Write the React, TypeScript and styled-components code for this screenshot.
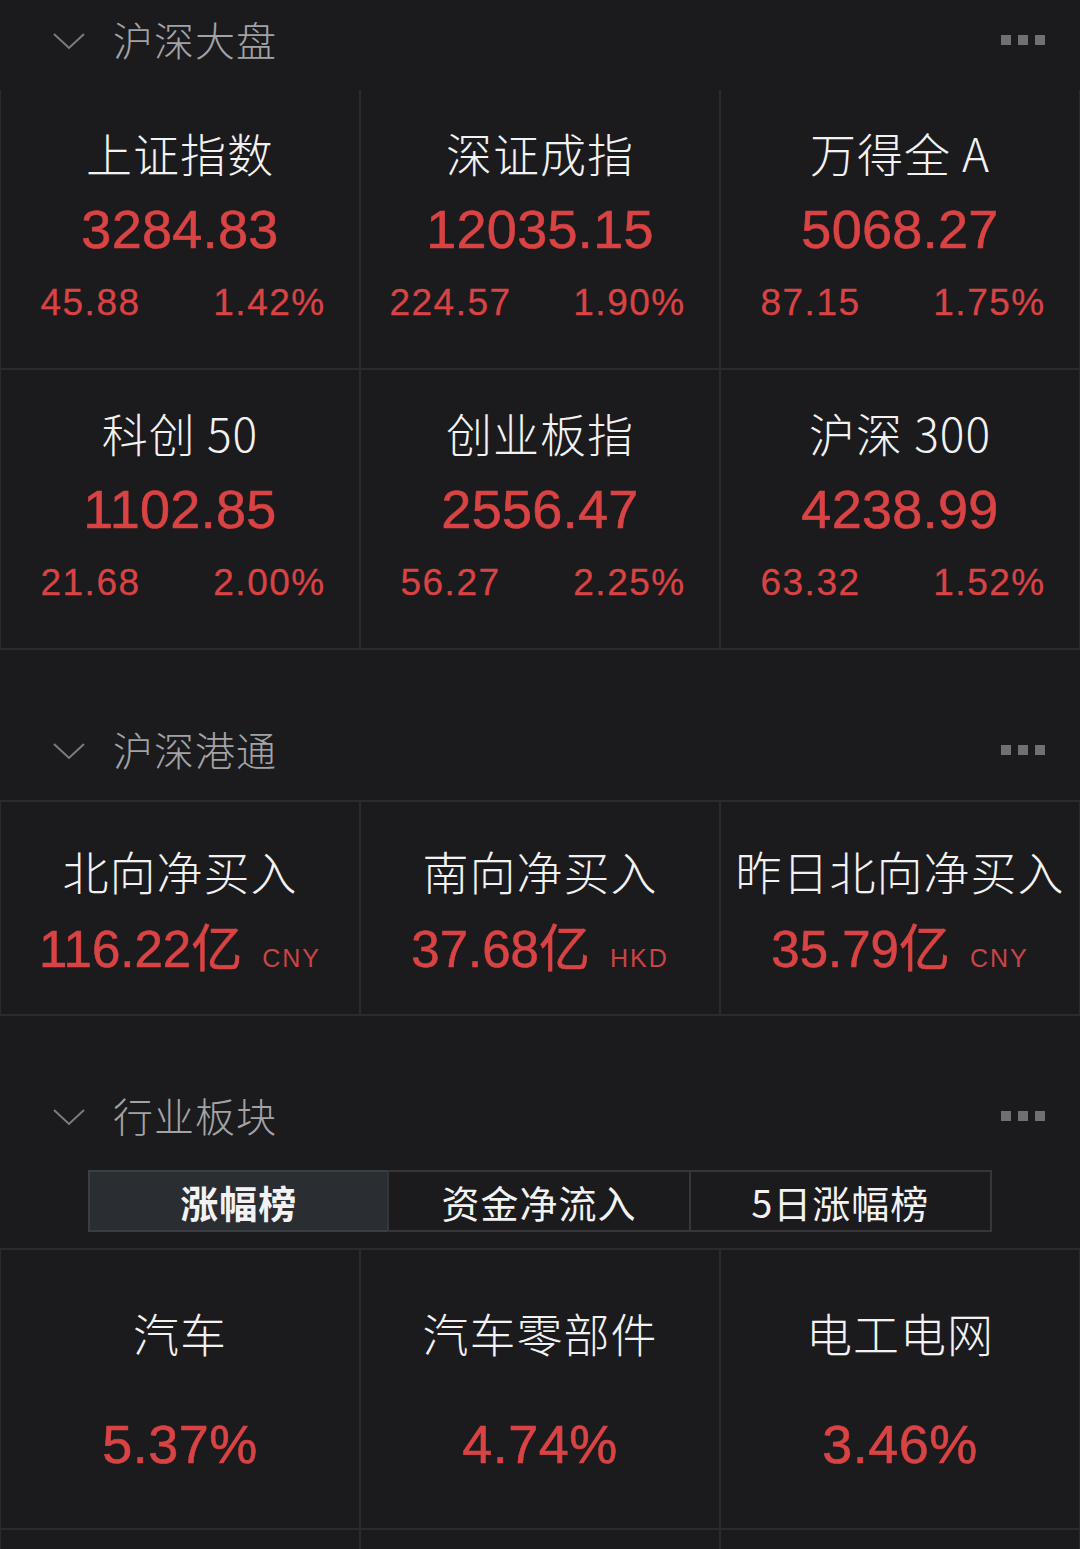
import React from "react";
import styled, { createGlobalStyle } from "styled-components";

const RED = "#d94343";
const LINE = "#2b2b2f";
const BG = "#1b1b1e";

type Index = { name: string; value: string; change: string; pct: string };
type Flow = { name: string; value: string; unit: string };
type Sector = { name: string; pct: string };

const indices: Index[] = [
  { name: "上证指数", value: "3284.83", change: "45.88", pct: "1.42%" },
  { name: "深证成指", value: "12035.15", change: "224.57", pct: "1.90%" },
  { name: "万得全 A", value: "5068.27", change: "87.15", pct: "1.75%" },
  { name: "科创 50", value: "1102.85", change: "21.68", pct: "2.00%" },
  { name: "创业板指", value: "2556.47", change: "56.27", pct: "2.25%" },
  { name: "沪深 300", value: "4238.99", change: "63.32", pct: "1.52%" },
];

const flows: Flow[] = [
  { name: "北向净买入", value: "116.22亿", unit: "CNY" },
  { name: "南向净买入", value: "37.68亿", unit: "HKD" },
  { name: "昨日北向净买入", value: "35.79亿", unit: "CNY" },
];

const sectors: Sector[] = [
  { name: "汽车", pct: "5.37%" },
  { name: "汽车零部件", pct: "4.74%" },
  { name: "电工电网", pct: "3.46%" },
];

const tabs = ["涨幅榜", "资金净流入", "5日涨幅榜"];

export default function App() {
  return (
    <>
      <GlobalStyle />
      <Page>
        <SectionHeader title="沪深大盘" first />
        <Grid>
          {indices.map((it) => (
            <IndexCell key={it.name}>
              <Label>{it.name}</Label>
              <BigValue>{it.value}</BigValue>
              <SubRow>
                <span>{it.change}</span>
                <span>{it.pct}</span>
              </SubRow>
            </IndexCell>
          ))}
        </Grid>

        <SectionHeader title="沪深港通" />
        <Grid $top>
          {flows.map((f) => (
            <FlowCell key={f.name}>
              <Label>{f.name}</Label>
              <FlowValue>
                {f.value}
                <Unit>{f.unit}</Unit>
              </FlowValue>
            </FlowCell>
          ))}
        </Grid>

        <SectionHeader title="行业板块" />
        <TabBar>
          {tabs.map((t, i) => (
            <Tab key={t} $active={i === 0}>
              {t}
            </Tab>
          ))}
        </TabBar>
        <Grid $top>
          {sectors.map((s) => (
            <SectorCell key={s.name}>
              <Label>{s.name}</Label>
              <SectorValue>{s.pct}</SectorValue>
            </SectorCell>
          ))}
          <SectorCell />
          <SectorCell />
          <SectorCell />
        </Grid>
      </Page>
    </>
  );
}

function SectionHeader({ title, first }: { title: string; first?: boolean }) {
  return (
    <Header $first={first}>
      <Chevron width="34" height="20" viewBox="0 0 34 20">
        <path d="M2 3 L17 17 L32 3" fill="none" stroke="#7c7c80" strokeWidth="2" />
      </Chevron>
      <Title>{title}</Title>
      <Dots>
        <i />
        <i />
        <i />
      </Dots>
    </Header>
  );
}

const GlobalStyle = createGlobalStyle`
  html, body {
    margin: 0;
    padding: 0;
    background: ${BG};
  }
  body {
    font-family: "Noto Sans CJK SC", "Liberation Sans", sans-serif;
  }
`;

const Page = styled.div`
  width: 1080px;
  height: 1549px;
  overflow: hidden;
  background: ${BG};
`;

const Header = styled.div<{ $first?: boolean }>`
  display: flex;
  align-items: center;
  height: ${(p) => (p.$first ? "80px" : "100px")};
  margin-top: ${(p) => (p.$first ? "0" : "50px")};
  padding-bottom: ${(p) => (p.$first ? "10px" : "0")};
  padding-left: 52px;
  padding-right: 35px;
`;

const Chevron = styled.svg`
  flex: none;
  margin-top: 2px;
`;

const Title = styled.div`
  margin-left: 27px;
  margin-top: -3px;
  font-size: 40px;
  line-height: 1;
  color: #a3a3a6;
  font-weight: 300;
  letter-spacing: 1px;
`;

const Dots = styled.div`
  margin-left: auto;
  display: flex;
  gap: 7px;

  i {
    display: block;
    width: 10px;
    height: 10px;
    background: #707074;
  }
`;

const Grid = styled.div<{ $top?: boolean }>`
  display: grid;
  grid-template-columns: repeat(3, 1fr);
  gap: 2px;
  background: ${LINE};
  padding: ${(p) => (p.$top ? "2px" : "0")} 1px 2px;
`;

const Cell = styled.div`
  background: ${BG};
  display: flex;
  flex-direction: column;
  align-items: center;
  box-sizing: border-box;
`;

const IndexCell = styled(Cell)`
  height: 278px;
  padding-top: 33px;
`;

const FlowCell = styled(Cell)`
  height: 212px;
  padding-top: 39px;
`;

const SectorCell = styled(Cell)`
  height: 278px;
  padding-top: 53px;
`;

const Label = styled.div`
  font-size: 46px;
  line-height: 58px;
  color: #f2f2f2;
  font-weight: 300;
  white-space: nowrap;
  letter-spacing: 1px;
`;

const Num = styled.div`
  font-family: "Liberation Sans", "Noto Sans CJK SC", sans-serif;
  color: ${RED};
  white-space: nowrap;
`;

const BigValue = styled(Num)`
  margin-top: 11px;
  font-size: 54px;
  line-height: 74px;
  letter-spacing: 0.3px;
  -webkit-text-stroke: 0.6px ${RED};
`;

const SubRow = styled(Num)`
  margin-top: 12px;
  align-self: stretch;
  display: grid;
  grid-template-columns: 1fr 1fr;
  font-size: 37px;
  line-height: 50px;
  letter-spacing: 1.5px;
  -webkit-text-stroke: 0.3px ${RED};

  span {
    text-align: center;
  }
`;

const FlowValue = styled(Num)`
  margin-top: 16px;
  font-size: 51px;
  line-height: 70px;
  -webkit-text-stroke: 0.6px ${RED};
`;

const Unit = styled.span`
  margin-left: 20px;
  font-size: 25px;
  letter-spacing: 2px;
  color: #c94545;
  -webkit-text-stroke: 0;
`;

const SectorValue = styled(Num)`
  margin-top: 48px;
  font-size: 54px;
  line-height: 70px;
  letter-spacing: 0.5px;
  -webkit-text-stroke: 0.6px ${RED};
`;

const TabBar = styled.div`
  display: grid;
  grid-template-columns: repeat(3, 1fr);
  width: 904px;
  margin: 4px auto 16px;
`;

const Tab = styled.div<{ $active?: boolean }>`
  height: 62px;
  display: flex;
  align-items: center;
  justify-content: center;
  box-sizing: border-box;
  border: 2px solid ${(p) => (p.$active ? "#3b3e43" : "#36363a")};
  margin-left: -2px;
  background: ${(p) => (p.$active ? "#2a2d31" : BG)};
  color: #f2f2f2;
  font-size: 38px;
  font-weight: ${(p) => (p.$active ? 700 : 400)};
  letter-spacing: 1px;

  &:first-child {
    margin-left: 0;
  }
`;
